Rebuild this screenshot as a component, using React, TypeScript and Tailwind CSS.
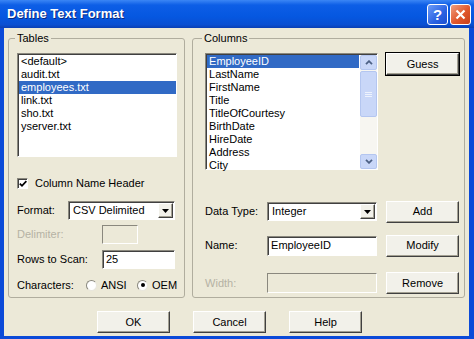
import React from 'react';

const sunken =
  'bg-white border border-t-[#8a887e] border-l-[#8a887e] border-r-white border-b-white shadow-[inset_1px_1px_0_#404040]';
const raised =
  'bg-[#f2f1ea] border border-t-white border-l-white border-r-[#404040] border-b-[#404040] shadow-[inset_-1px_-1px_0_#a3a092]';

const Btn = ({ label, def = false }: { label: string; def?: boolean }) => (
  <div
    className={`w-[73px] h-[22px] flex items-center justify-center text-[11px] text-black ${raised} ${
      def ? 'outline outline-1 outline-black' : ''
    }`}
  >
    {label}
  </div>
);

const DropArrow = () => (
  <div className={`w-[15px] h-[15px] flex items-center justify-center ${raised}`}>
    <svg width="7" height="4" viewBox="0 0 7 4">
      <path d="M0 0h7L3.5 4z" fill="#000" />
    </svg>
  </div>
);

const Combo = ({ value, w }: { value: string; w: string }) => (
  <div className={`${w} h-[19px] flex items-center pl-[4px] pr-[1px] ${sunken}`}>
    <span className="flex-1 text-[11px] leading-none">{value}</span>
    <DropArrow />
  </div>
);

const Label = ({ text, w, disabled = false }: { text: string; w: string; disabled?: boolean }) => (
  <span className={`${w} text-[11px] ${disabled ? 'text-[#b5b2a4]' : 'text-black'}`}>{text}</span>
);

const Radio = ({ checked }: { checked?: boolean }) => (
  <span className="w-[11px] h-[11px] rounded-full bg-white border border-t-[#8a887e] border-l-[#8a887e] border-r-[#e8e6dc] border-b-[#e8e6dc] flex items-center justify-center">
    {checked && <span className="w-[4px] h-[4px] rounded-full bg-black" />}
  </span>
);

const Row = ({ text, selected = false }: { text: string; selected?: boolean }) => (
  <div
    className={`h-[13px] leading-[13px] pl-[2px] text-[11px] ${
      selected ? 'bg-[#316ac5] text-white' : 'text-black'
    }`}
  >
    {text}
  </div>
);

const ScrollBtn = ({ up }: { up?: boolean }) => (
  <div className="h-[15px] rounded-[2px] bg-[#c9d7f8] border border-[#b4c6f0] flex items-center justify-center">
    <svg width="8" height="5" viewBox="0 0 8 5">
      <path d={up ? 'M1 4.2L4 1.2L7 4.2' : 'M1 0.8L4 3.8L7 0.8'} stroke="#4d6185" strokeWidth="1.8" fill="none" />
    </svg>
  </div>
);

const tables = ['<default>', 'audit.txt', 'employees.txt', 'link.txt', 'sho.txt', 'yserver.txt'];
const columns = ['EmployeeID', 'LastName', 'FirstName', 'Title', 'TitleOfCourtesy', 'BirthDate', 'HireDate', 'Address', 'City'];

const App: React.FC = () => {
  return (
    <div className="w-[474px] h-[339px] flex flex-col bg-[#0b4ad8] font-['Liberation_Sans',Arial,sans-serif] overflow-hidden">
      {/* title bar */}
      <div className="h-[28px] shrink-0 flex items-center pl-[7px] pr-[3px] bg-[linear-gradient(180deg,#3b86f5_0%,#0d5ee6_18%,#0557e0_60%,#0a4fd2_88%,#0a3fb4_100%)]">
        <span className="flex-1 text-[13px] font-bold text-white [text-shadow:1px_1px_0_#0a2a80]">
          Define Text Format
        </span>
        <div className="flex gap-[2px]">
          <div className="w-[21px] h-[21px] rounded-[3px] border border-white bg-[linear-gradient(135deg,#6b9cf8,#2a62e2_60%,#1c4fd0)] flex items-center justify-center text-white text-[15px] font-bold leading-none">
            ?
          </div>
          <div className="w-[21px] h-[21px] rounded-[3px] border border-white bg-[linear-gradient(135deg,#f0a080,#e0572c_55%,#c8401a)] flex items-center justify-center">
            <svg width="11" height="11" viewBox="0 0 11 11">
              <path d="M1.5 1.5L9.5 9.5M9.5 1.5L1.5 9.5" stroke="#fff" strokeWidth="2.2" />
            </svg>
          </div>
        </div>
      </div>

      {/* client */}
      <div className="ml-[4px] mr-[5px] mb-[3px] flex-1 bg-[#ece9d8] flex flex-col pt-[3px]">
        <div className="flex gap-[7px] pl-[4px]">
          {/* Tables */}
          <fieldset className="w-[175px] h-[267px] border border-[#b0ad9e] rounded-[3px] pl-[8px] pr-[7px] flex flex-col">
            <legend className="-ml-[2px] px-[2px] text-[11px] leading-[14px] text-black">Tables</legend>
            <div className={`mt-[8px] h-[104px] pt-[1px] pl-[1px] ${sunken}`}>
              {tables.map((t) => (
                <Row key={t} text={t} selected={t === 'employees.txt'} />
              ))}
            </div>
            <div className="mt-[20px] h-[13px] flex items-center gap-[7px]">
              <span className={`w-[11px] h-[11px] flex items-center justify-center ${sunken}`}>
                <svg width="8" height="8" viewBox="0 0 8 8">
                  <path d="M0.8 3.6L3 5.8L7.4 1.2" stroke="#000" strokeWidth="1.8" fill="none" />
                </svg>
              </span>
              <span className="text-[11px] text-black">Column Name Header</span>
            </div>
            <div className="mt-[10px] h-[21px] flex items-center">
              <Label text="Format:" w="w-[51px]" />
              <Combo value="CSV Delimited" w="w-[107px]" />
            </div>
            <div className="mt-[3px] h-[20px] flex items-center">
              <Label text="Delimiter:" w="w-[85px]" disabled />
              <div className="w-[36px] h-[19px] bg-[#ece9d8] border border-t-[#8a887e] border-l-[#8a887e] border-r-white border-b-white" />
            </div>
            <div className="mt-[5px] h-[21px] flex items-center">
              <Label text="Rows to Scan:" w="w-[85px]" />
              <div className={`w-[73px] h-[19px] flex items-center pl-[3px] text-[11px] ${sunken}`}>25</div>
            </div>
            <div className="mt-[7px] h-[16px] flex items-center">
              <Label text="Characters:" w="w-[69px]" />
              <Radio />
              <span className="ml-[4px] w-[36px] text-[11px] text-black">ANSI</span>
              <Radio checked />
              <span className="ml-[4px] text-[11px] text-black">OEM</span>
            </div>
          </fieldset>

          {/* Columns */}
          <fieldset className="w-[273px] h-[267px] border border-[#b0ad9e] rounded-[3px] pl-[12px] pr-[5px] flex flex-col">
            <legend className="-ml-[3px] px-[2px] text-[11px] leading-[14px] text-black">Columns</legend>
            <div className="mt-[8px] flex gap-[8px] items-start">
              <div className={`w-[173px] h-[117px] flex pl-[1px] pt-[1px] ${sunken}`}>
                <div className="flex-1 pr-[1px]">
                  {columns.map((c) => (
                    <Row key={c} text={c} selected={c === 'EmployeeID'} />
                  ))}
                </div>
                <div className="w-[17px] flex flex-col bg-[#f7f6f1]">
                  <ScrollBtn up />
                  <div className="mt-[1px] h-[46px] rounded-[2px] bg-[#c9d7f8] border border-[#b4c6f0] flex flex-col items-center justify-center gap-[1px]">
                    <span className="w-[7px] h-px bg-[#eef3fd]" />
                    <span className="w-[7px] h-px bg-[#eef3fd]" />
                    <span className="w-[7px] h-px bg-[#eef3fd]" />
                  </div>
                  <div className="flex-1" />
                  <ScrollBtn />
                </div>
              </div>
              <Btn label="Guess" def />
            </div>
            <div className="mt-[31px] h-[21px] flex items-center">
              <Label text="Data Type:" w="w-[62px]" />
              <Combo value="Integer" w="w-[110px]" />
              <div className="ml-[9px]">
                <Btn label="Add" />
              </div>
            </div>
            <div className="mt-[13px] h-[21px] flex items-center">
              <Label text="Name:" w="w-[62px]" />
              <div className={`w-[110px] h-[20px] flex items-center pl-[3px] text-[11px] ${sunken}`}>EmployeeID</div>
              <div className="ml-[9px]">
                <Btn label="Modify" />
              </div>
            </div>
            <div className="mt-[16px] h-[22px] flex items-center">
              <Label text="Width:" w="w-[62px]" disabled />
              <div className="w-[110px] h-[20px] bg-[#ece9d8] border border-t-[#8a887e] border-l-[#8a887e] border-r-white border-b-white" />
              <div className="ml-[9px]">
                <Btn label="Remove" />
              </div>
            </div>
          </fieldset>
        </div>

        {/* dialog buttons */}
        <div className="mt-[13px] pl-[93px] flex gap-[23px]">
          <Btn label="OK" />
          <Btn label="Cancel" />
          <Btn label="Help" />
        </div>
      </div>
    </div>
  );
};

export default App;
